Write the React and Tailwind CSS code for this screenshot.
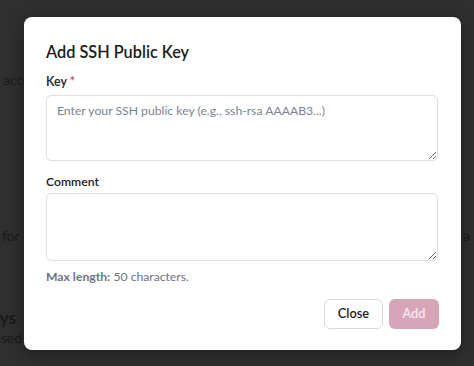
import { useState } from 'react';

// Page behind the dialog, only the edges peek out
const PageBehind = () => (
  <div className="flex flex-col text-[#8c8c8c]">
    <div className="h-[71px]" />
    <p className="pl-[3px] text-[14px] leading-[18px] whitespace-nowrap">accounts you use with this service.</p>
    <div className="h-[138px]" />
    <div className="flex justify-between text-[14px] leading-[18px] whitespace-nowrap">
      <span className="pl-[2px]">for signing your commits and</span>
      <span className="w-[11px] overflow-hidden">a new</span>
    </div>
    <div className="h-[62px]" />
    <div className="flex w-[16px] justify-end">
      <h2 className="shrink-0 text-[17px] leading-[22px] font-bold whitespace-nowrap">SSH Keys</h2>
    </div>
    <p className="-ml-[7px] text-[14px] leading-[18px] whitespace-nowrap">used with your account</p>
  </div>
);

export default function App() {
  const [key, setKey] = useState('');
  const [comment, setComment] = useState('');

  return (
    <div className="relative h-[366px] w-[474px] overflow-hidden bg-white" style={{ fontFamily: 'Lato, "Noto Sans", sans-serif' }}>
      <PageBehind />
      <div className="absolute inset-0 bg-black/[0.815]">
        <div className="mt-[17px] ml-[24px] w-[437px] rounded-[8px] bg-white px-[22px] pt-[22px] pb-[21px] shadow-[0_4px_16px_rgba(0,0,0,0.35)]">
          <h1 className="text-[16.3px] leading-[26px] font-semibold text-[#1b1b1b]">Add SSH Public Key</h1>

          <label className="mt-[7px] block text-[12.5px] leading-[20px] font-semibold text-[#222]">
            Key <span className="text-[#c2455f]">*</span>
          </label>
          <textarea
            value={key}
            onChange={e => setKey(e.target.value)}
            placeholder="Enter your SSH public key (e.g., ssh-rsa AAAAB3...)"
            className="mt-[3px] block h-[66px] w-[392px] rounded-[5px] border border-[#dcdfe3] px-[10px] py-[6px] text-[12.2px] leading-[18px] text-[#222] placeholder:text-[#7b8491] outline-none"
          />

          <label className="mt-[11px] block text-[12.2px] leading-[20px] font-semibold text-[#222]">Comment</label>
          <textarea
            value={comment}
            onChange={e => setComment(e.target.value)}
            className="mt-[1px] block h-[68px] w-[392px] rounded-[5px] border border-[#dcdfe3] px-[10px] py-[6px] text-[12.2px] leading-[18px] text-[#222] outline-none"
          />

          <p className="mt-[6px] text-[12.2px] leading-[20px] text-[#6b7483]">
            <span className="font-bold">Max length:</span> 50 characters.
          </p>

          <div className="mt-[12px] flex justify-end gap-[6px]">
            <button className="h-[30px] w-[59px] rounded-[6px] border border-[#d9d9d9] bg-white text-[12.8px] font-semibold text-[#1b1b1b]">Close</button>
            <button disabled className="h-[30px] w-[50px] rounded-[6px] bg-[#d6a6b8] text-[12.8px] font-semibold text-[#f6e9ef]">Add</button>
          </div>
        </div>
      </div>
    </div>
  );
}
